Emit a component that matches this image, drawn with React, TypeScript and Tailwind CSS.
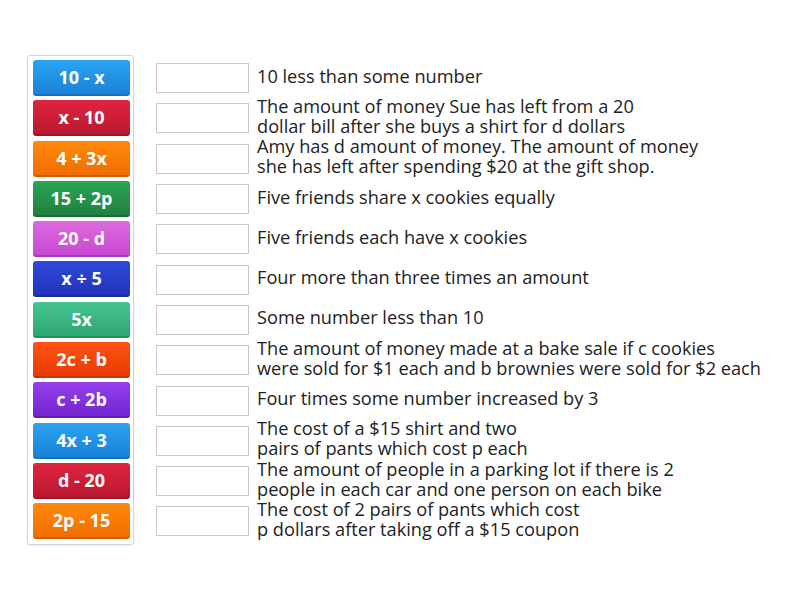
const items = [
  { label: '10 - x', cls: 'from-[#2ba4f2] to-[#1a82d6] border-[#1670bb]', text: ['10 less than some number'] },
  { label: 'x - 10', cls: 'from-[#de2540] to-[#bb1730] border-[#a0122a]', text: ['The amount of money Sue has left from a 20', 'dollar bill after she buys a shirt for d dollars'] },
  { label: '4 + 3x', cls: 'from-[#ff8a0c] to-[#f06e00] border-[#d25d00]', text: ['Amy has d amount of money. The amount of money', 'she has left after spending $20 at the gift shop.'] },
  { label: '15 + 2p', cls: 'from-[#2ba553] to-[#1f8240] border-[#196c35]', text: ['Five friends share x cookies equally'] },
  { label: '20 - d', cls: 'from-[#de6ae0] to-[#c847d0] border-[#ab37b4]', text: ['Five friends each have x cookies'] },
  { label: 'x ÷ 5', cls: 'from-[#3049dd] to-[#2233b8] border-[#1b2a9c]', text: ['Four more than three times an amount'] },
  { label: '5x', cls: 'from-[#45c690] to-[#2fa574] border-[#258c61]', text: ['Some number less than 10'] },
  { label: '2c + b', cls: 'from-[#ff5214] to-[#e83b00] border-[#c93300]', text: ['The amount of money made at a bake sale if c cookies', 'were sold for $1 each and b brownies were sold for $2 each'] },
  { label: 'c + 2b', cls: 'from-[#9440ec] to-[#7424d0] border-[#621cb4]', text: ['Four times some number increased by 3'] },
  { label: '4x + 3', cls: 'from-[#2ba4f2] to-[#1a82d6] border-[#1670bb]', text: ['The cost of a $15 shirt and two', 'pairs of pants which cost p each'] },
  { label: 'd - 20', cls: 'from-[#de2540] to-[#bb1730] border-[#a0122a]', text: ['The amount of people in a parking lot if there is 2', 'people in each car and one person on each bike'] },
  { label: '2p - 15', cls: 'from-[#ff8a0c] to-[#f06e00] border-[#d25d00]', text: ['The cost of 2 pairs of pants which cost', 'p dollars after taking off a $15 coupon'] },
]

export default function App() {
  return (
    <div className="w-[800px] h-[600px] bg-white font-['Open_Sans',sans-serif] pt-[55px] pl-[27px]">
      <div className="flex items-start">
        {/* answer tiles */}
        <div className="w-[107px] border border-[#d4d4d4] rounded-[3px] pt-[4px] pb-[5px] pl-[5px] pr-[3px] flex flex-col gap-[4.3px] shadow-[0_1px_2px_rgba(0,0,0,0.08)]">
          {items.map((it) => (
            <div
              key={it.label}
              className={`h-[36px] rounded-[3px] bg-gradient-to-b border-b-2 ${it.cls} flex items-center justify-center text-white font-bold text-[18px] leading-none`}
            >
              {it.label}
            </div>
          ))}
        </div>
        {/* drop boxes + prompts */}
        <div className="ml-[22px] pt-[3px] flex flex-col">
          {items.map((it) => (
            <div key={it.label} className="h-[40.3px] flex items-center">
              <div className="w-[93px] h-[30px] border border-[#c8c8c8] bg-white shrink-0" />
              <div className="ml-[8px] mb-[5px] text-[18.2px] leading-[20px] text-[#222] whitespace-nowrap">
                {it.text.map((t) => (
                  <div key={t}>{t}</div>
                ))}
              </div>
            </div>
          ))}
        </div>
      </div>
    </div>
  )
}
